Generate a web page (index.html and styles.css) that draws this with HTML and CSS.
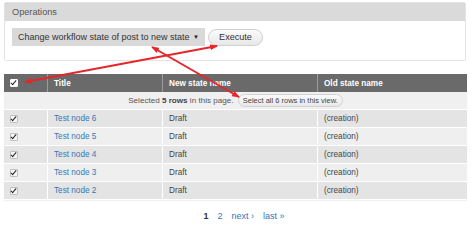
FILE: index.html
```html
<!DOCTYPE html>
<html>
<head>
<meta charset="utf-8">
<link rel="stylesheet" href="styles.css">
</head>
<body>
<div class="page">
  <div class="fieldset">
    <div class="legend">Operations</div>
    <div class="fieldset-body">
      <div class="select"><span>Change workflow state of post to new state</span><span class="arrow">&#9660;</span></div>
      <button class="execute">Execute</button>
    </div>
  </div>

  <table class="views-table">
    <thead>
      <tr>
        <th class="col-check"><span class="cb cb-head"></span></th>
        <th class="col-title">Title</th>
        <th class="col-new">New state name</th>
        <th class="col-old">Old state name</th>
      </tr>
    </thead>
    <tbody>
      <tr class="select-all-row">
        <td colspan="4">Selected <b>5 rows</b> in this page. <button class="select-all">Select all 6 rows in this view.</button></td>
      </tr>
      <tr class="odd">
        <td class="col-check"><span class="cb"></span></td>
        <td><a href="#">Test node 6</a></td>
        <td>Draft</td>
        <td>(creation)</td>
      </tr>
      <tr class="even">
        <td class="col-check"><span class="cb"></span></td>
        <td><a href="#">Test node 5</a></td>
        <td>Draft</td>
        <td>(creation)</td>
      </tr>
      <tr class="odd">
        <td class="col-check"><span class="cb"></span></td>
        <td><a href="#">Test node 4</a></td>
        <td>Draft</td>
        <td>(creation)</td>
      </tr>
      <tr class="even">
        <td class="col-check"><span class="cb"></span></td>
        <td><a href="#">Test node 3</a></td>
        <td>Draft</td>
        <td>(creation)</td>
      </tr>
      <tr class="odd">
        <td class="col-check"><span class="cb"></span></td>
        <td><a href="#">Test node 2</a></td>
        <td>Draft</td>
        <td>(creation)</td>
      </tr>
    </tbody>
  </table>

  <ul class="pager">
    <li class="current">1</li>
    <li><a href="#">2</a></li>
    <li><a href="#">next &rsaquo;</a></li>
    <li><a href="#">last &raquo;</a></li>
  </ul>
</div>

<!-- annotation arrows drawn over the screenshot -->
<svg class="arrows" width="474" height="234" viewBox="0 0 474 234">
  <defs>
    <marker id="head" markerWidth="8" markerHeight="6" refX="7" refY="3" orient="auto-start-reverse" markerUnits="userSpaceOnUse">
      <path d="M0,0 L8,3 L0,6 z" fill="#e5262b"/>
    </marker>
  </defs>
  <line x1="25" y1="82" x2="217" y2="46" stroke="#e5262b" stroke-width="2" marker-start="url(#head)" marker-end="url(#head)"/>
  <line x1="152" y1="47" x2="239" y2="97" stroke="#e5262b" stroke-width="2" marker-start="url(#head)" marker-end="url(#head)"/>
</svg>
</body>
</html>
```

FILE: styles.css
```css
body {
  margin: 0;
  font-family: "Liberation Sans", Arial, sans-serif;
  color: #444;
  background: #fff;
}

.page {
  padding: 2px 7px 0 4px;
}

.fieldset {
  border: 1px solid #e3e3e3;
  border-radius: 2px;
  margin-right: 1px;
}

.legend {
  height: 18px;
  line-height: 18px;
  padding-left: 7px;
  background: #dadada;
  font-size: 9.2px;
  color: #555;
}

.fieldset-body {
  display: flex;
  align-items: center;
  gap: 3px;
  padding: 7px 7px 14px;
}

.select {
  width: 193px;
  height: 18px;
  box-sizing: border-box;
  padding: 0 6px 0 6px;
  background: #d9d9d9;
  display: flex;
  align-items: center;
  justify-content: space-between;
  font-size: 9px;
  color: #333;
}

.select .arrow {
  font-size: 6px;
  color: #222;
}

.execute {
  width: 55px;
  height: 17px;
  padding: 0;
  border: 1px solid #cfcfcf;
  border-radius: 9px;
  background: linear-gradient(#fbfbfb, #e8e8e8);
  font-family: inherit;
  font-size: 9.1px;
  color: #333;
}

.views-table {
  margin-top: 13px;
  width: 463px;
  border-collapse: collapse;
  font-size: 8.2px;
  box-shadow: 0 1px 1px rgba(0, 0, 0, 0.06);
}

.views-table th,
.views-table td {
  height: 17px;
  padding: 0 6px;
  text-align: left;
  border-left: 1px solid #fff;
  border-bottom: 1px solid #fff;
}

.views-table th {
  height: 18px;
  background: #6a6a6a;
  color: #fff;
  font-weight: bold;
  border-left-color: #9a9a9a;
  border-bottom: 0;
}

.views-table tr > :first-child {
  border-left: 0;
}

.col-check { width: 31px; }
.col-title { width: 102px; }
.col-new { width: 142px; }

.select-all-row td {
  background: #f0f0f0;
  text-align: center;
  font-size: 8.1px;
  color: #555;
}

.select-all-row b {
  color: #444;
}

.select-all {
  height: 13px;
  padding: 0 4px;
  margin-left: 2px;
  border: 1px solid #d2d2d2;
  border-radius: 7px;
  background: linear-gradient(#fafafa, #e9e9e9);
  font-family: inherit;
  font-size: 7.5px;
  color: #444;
  vertical-align: middle;
}

tr.odd td { background: #e4e4e4; }
tr.even td { background: #efefef; }

.views-table a {
  color: #3578b4;
  text-decoration: none;
}

.cb {
  display: inline-block;
  position: relative;
  width: 6px;
  height: 6px;
  border: 1px solid #c0c0c0;
  border-radius: 1px;
  background: #f6f6f6;
  vertical-align: middle;
}

.cb::after {
  content: "";
  position: absolute;
  left: 1px;
  top: -1px;
  width: 2px;
  height: 5px;
  border: solid #222;
  border-width: 0 1.5px 1.5px 0;
  transform: rotate(40deg);
}

.cb-head {
  background: #fff;
  border-color: #fff;
}

.pager {
  list-style: none;
  margin: 10px 0 0;
  padding: 0 0 0 17px;
  display: flex;
  justify-content: center;
  gap: 9px;
  font-size: 9px;
  line-height: 12px;
}

.pager .current {
  font-weight: bold;
  color: #333;
}

.pager a {
  color: #3578b4;
  text-decoration: none;
}

.arrows {
  position: absolute;
  left: 0;
  top: 0;
  pointer-events: none;
}
```
